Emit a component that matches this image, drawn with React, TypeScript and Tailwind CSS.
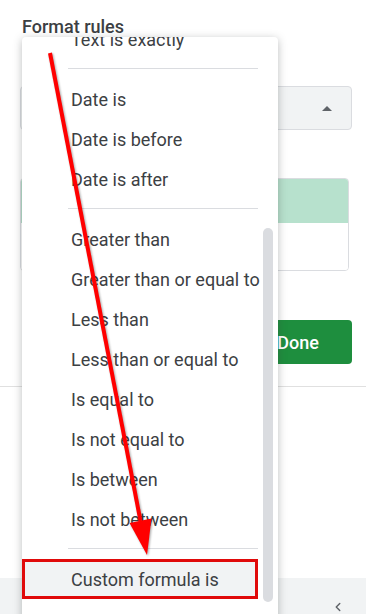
import { ChevronLeft } from 'lucide-react';

type Row = { kind: 'item'; label: string; active?: boolean } | { kind: 'sep' };

const rows: Row[] = [
  { kind: 'item', label: 'Text is exactly' },
  { kind: 'sep' },
  { kind: 'item', label: 'Date is' },
  { kind: 'item', label: 'Date is before' },
  { kind: 'item', label: 'Date is after' },
  { kind: 'sep' },
  { kind: 'item', label: 'Greater than' },
  { kind: 'item', label: 'Greater than or equal to' },
  { kind: 'item', label: 'Less than' },
  { kind: 'item', label: 'Less than or equal to' },
  { kind: 'item', label: 'Is equal to' },
  { kind: 'item', label: 'Is not equal to' },
  { kind: 'item', label: 'Is between' },
  { kind: 'item', label: 'Is not between' },
  { kind: 'sep' },
  { kind: 'item', label: 'Custom formula is', active: true },
];

const ConditionMenu = () => (
  <div className="absolute left-[22px] top-[37px] w-[256px] h-[600px] overflow-hidden rounded-t bg-white shadow-[0_2px_8px_rgba(60,64,67,0.35)]">
    <div className="-mt-[18px] mr-[20px]">
      {rows.map((row, i) =>
        row.kind === 'sep' ? (
          <div key={i} className="h-5 pt-[9px] pl-[46px]">
            <div className="h-px bg-[#dadce0]" />
          </div>
        ) : (
          <div
            key={i}
            className={`h-10 flex items-center text-[18px] text-[#3c4043] whitespace-nowrap ${
              row.active ? 'bg-[#f1f3f4] border-[3px] border-[#e00a0a] pl-[46px]' : 'pl-[49px]'
            }`}
          >
            {row.label}
          </div>
        )
      )}
    </div>

    {/* scrollbar */}
    <div className="absolute left-[241px] top-[191px] w-[10px] h-[374px] rounded-full bg-[#dadce0]" />
  </div>
);

const RedArrow = () => (
  <svg className="absolute left-0 top-0 w-[366px] h-[614px] pointer-events-none" viewBox="0 0 366 614">
    <g style={{ filter: 'drop-shadow(1px 1px 1px rgba(0,0,0,0.35))' }}>
      <line x1="50" y1="53" x2="140.5" y2="521" stroke="#f00" strokeWidth="4" />
      <polygon points="147,555 129.5,523 151.5,518.5" fill="#f00" />
    </g>
  </svg>
);

const App = () => {
  return (
    <div
      className="relative w-[366px] h-[614px] overflow-hidden bg-white flex flex-col"
      style={{ fontFamily: 'Roboto, "Noto Sans", sans-serif' }}
    >
      <div className="mt-[15px] pl-[22px] text-[18px] leading-6 font-medium text-[#3c4043]">Format rules</div>

      {/* condition select */}
      <div className="mt-[47px] ml-[20px] mr-[14px] h-[44px] rounded border border-[#dadce0] bg-[#f1f3f4] flex items-center justify-end pr-[19px]">
        <div className="w-0 h-0 border-l-[5px] border-r-[5px] border-b-[5px] border-l-transparent border-r-transparent border-b-[#5f6368]" />
      </div>

      {/* formatting style preview */}
      <div className="mt-[48px] ml-[20px] mr-[17px] h-[93px] rounded border border-[#dadce0] overflow-hidden flex flex-col">
        <div className="h-[44px] bg-[#b7e1cd]" />
        <div className="flex-1 bg-white" />
      </div>

      <div className="mt-[49px] mr-[14px] self-end w-[108px] h-[44px] rounded bg-[#1e8e3e] flex items-center justify-center text-white text-[18px] font-medium">
        Done
      </div>

      <div className="mt-[22px] h-px bg-[#e0e0e0]" />

      <div className="mt-auto h-[36px] bg-[#f1f3f4] flex justify-end items-start pt-[22px] pr-[21px]">
        <ChevronLeft className="w-[14px] h-[14px] text-[#5f6368]" strokeWidth={2.5} />
      </div>

      <ConditionMenu />
      <RedArrow />
    </div>
  );
};

export default App;
